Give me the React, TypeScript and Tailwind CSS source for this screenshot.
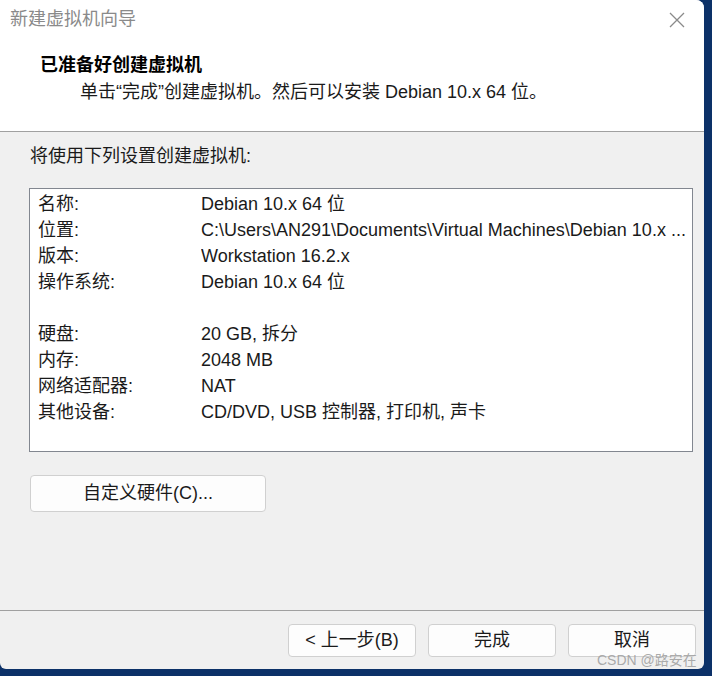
import React from "react";

const FONT = { fontFamily: '"Liberation Sans", "Noto Sans CJK SC", sans-serif' };

const rows: [string, string][] = [
  ["名称:", "Debian 10.x 64 位"],
  ["位置:", "C:\\Users\\AN291\\Documents\\Virtual Machines\\Debian 10.x ..."],
  ["版本:", "Workstation 16.2.x"],
  ["操作系统:", "Debian 10.x 64 位"],
  ["", ""],
  ["硬盘:", "20 GB, 拆分"],
  ["内存:", "2048 MB"],
  ["网络适配器:", "NAT"],
  ["其他设备:", "CD/DVD, USB 控制器, 打印机, 声卡"],
];

function Btn({ children, className }: { children: React.ReactNode; className: string }) {
  return (
    <div
      className={
        "flex items-center justify-center rounded-[4px] border border-[#d0d0d0] bg-[#fdfdfd] text-[18px] text-[#1a1a1a] " +
        className
      }
    >
      {children}
    </div>
  );
}

export default function App() {
  return (
    <div className="relative h-[676px] w-[712px] overflow-hidden bg-[#0c3168]" style={FONT}>
      <div className="flex h-[669px] w-[704px] flex-col overflow-hidden rounded-tr-[8px] rounded-b-[6px] bg-[#f0f0f0]">
        {/* Top white area */}
        <div className="h-[132px] shrink-0 border-b border-[#a0a0a0] bg-white">
          <div className="flex h-[39px] items-center justify-between pl-[10px] pr-[19px]">
            <span className="text-[18px] text-[#8a8a8a]">新建虚拟机向导</span>
            <svg width="16" height="16" viewBox="0 0 16 16">
              <path d="M1 1 L15 15 M15 1 L1 15" stroke="#8a8a8a" strokeWidth="1.3" fill="none" />
            </svg>
          </div>
          <div className="mt-[13px] pl-[40px] text-[18px] font-bold leading-[26px] text-black">已准备好创建虚拟机</div>
          <div className="mt-[1px] pl-[80px] text-[18px] leading-[26px] text-[#1a1a1a]">
            单击“完成”创建虚拟机。然后可以安装 Debian 10.x 64 位。
          </div>
        </div>

        {/* Body */}
        <div className="flex flex-1 flex-col">
          <div className="mt-[11px] pl-[30px] text-[18px] leading-[26px] text-[#1a1a1a]">将使用下列设置创建虚拟机:</div>
          <div className="ml-[29px] mt-[19px] h-[264px] w-[664px] border border-[#828790] bg-white pl-[8px] pt-[2px]">
            {rows.map(([k, v], i) => (
              <div key={i} className="flex h-[26px] items-center text-[18px] text-[#1a1a1a]">
                <div className="w-[163px] shrink-0">{k}</div>
                <div className="overflow-hidden whitespace-nowrap">{v}</div>
              </div>
            ))}
          </div>
          <Btn className="ml-[30px] mt-[23px] h-[37px] w-[236px]">自定义硬件(C)...</Btn>
        </div>

        {/* Footer */}
        <div className="flex h-[59px] shrink-0 justify-end gap-[12px] border-t border-[#a0a0a0] pr-[8px] pt-[13px]">
          <Btn className="h-[33px] w-[128px]">&lt; 上一步(B)</Btn>
          <Btn className="h-[33px] w-[128px]">完成</Btn>
          <Btn className="h-[33px] w-[128px]">取消</Btn>
        </div>
      </div>

      <div className="absolute left-[597px] top-[651px] text-[14px] leading-[18px] text-[#a0a0a0]/90">CSDN @路安在</div>
    </div>
  );
}
